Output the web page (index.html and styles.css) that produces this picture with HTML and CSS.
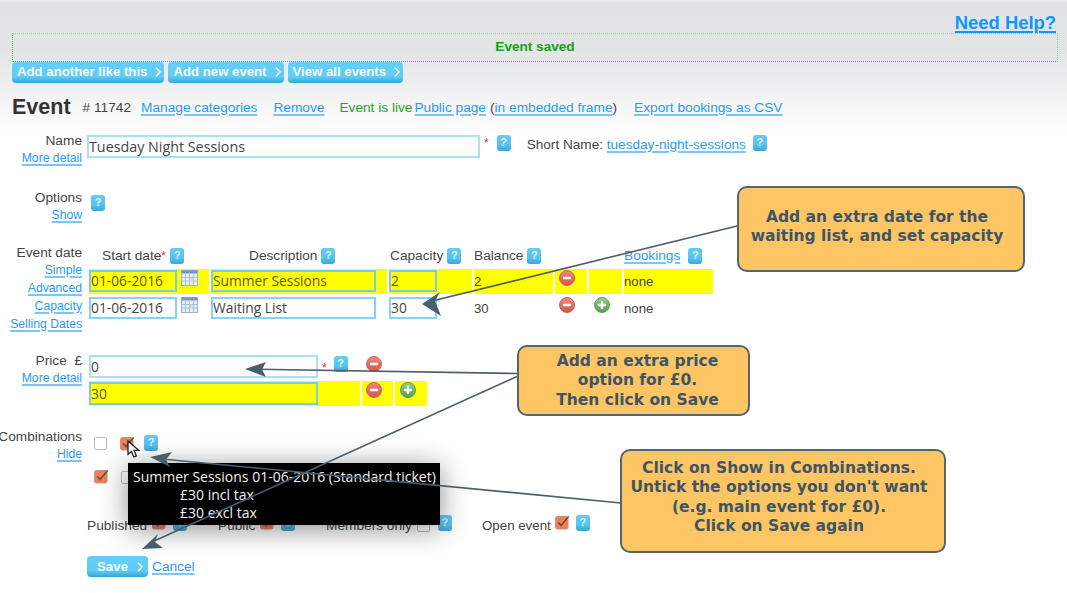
FILE: index.html
```html
<!DOCTYPE html>
<html lang="en">
<head>
<meta charset="utf-8">
<title>Event</title>
<link rel="stylesheet" href="styles.css">
</head>
<body>
<svg class="defs" width="0" height="0" aria-hidden="true">
  <defs>
    <linearGradient id="redg" x1="0" y1="0" x2="0" y2="1"><stop offset="0" stop-color="#f08a80"/><stop offset="1" stop-color="#d9524a"/></linearGradient>
    <linearGradient id="greeng" x1="0" y1="0" x2="0" y2="1"><stop offset="0" stop-color="#9bd08e"/><stop offset="1" stop-color="#4e9f49"/></linearGradient>
    <symbol id="minus" viewBox="0 0 16 16"><circle cx="8" cy="8" r="7.5" fill="url(#redg)" stroke="#c9605a" stroke-width="1"/><rect x="3.8" y="6.8" width="8.4" height="2.4" rx="1" fill="#fff"/></symbol>
    <symbol id="plus" viewBox="0 0 16 16"><circle cx="8" cy="8" r="7.5" fill="url(#greeng)" stroke="#5c9d58" stroke-width="1"/><rect x="3.8" y="6.8" width="8.4" height="2.4" rx="1" fill="#fff"/><rect x="6.8" y="3.8" width="2.4" height="8.4" rx="1" fill="#fff"/></symbol>
    <symbol id="check" viewBox="0 0 15 15"><rect x="0.5" y="1.5" width="12.5" height="12.5" rx="2" fill="#ec8058" stroke="#cf9078"/><path d="M3.2 7.2 L6 10.6 L13.6 1.4" fill="none" stroke="#6b4b3c" stroke-width="1.5"/></symbol>
    <symbol id="cal" viewBox="0 0 17 16"><rect x="0.5" y="0.5" width="16" height="15" fill="#e4eef9" stroke="#9ab4d6"/><rect x="0.5" y="0.5" width="16" height="3" fill="#7b94b8"/><path d="M4.5 4V15M8.5 4V15M12.5 4V15M1 7.5H16M1 11H16" stroke="#a4c2e8" stroke-width="1"/><rect x="9" y="8" width="3" height="3" fill="#f2e27a"/></symbol>
    <symbol id="chev" viewBox="0 0 6 10"><path d="M1 0.8 L5 5 L1 9.2" fill="none" stroke="#fff" stroke-width="1.4"/></symbol>
  </defs>
</svg>

<div class="page">
  <div class="helpbar"><a class="needhelp" href="#">Need Help?</a></div>
  <div class="msg">Event saved</div>
  <div class="actions">
    <a class="btn" href="#">Add another like this<svg class="chev"><use href="#chev"/></svg></a>
    <a class="btn" href="#">Add new event<svg class="chev"><use href="#chev"/></svg></a>
    <a class="btn" href="#">View all events<svg class="chev"><use href="#chev"/></svg></a>
  </div>

  <div class="titlebar">
    <h1>Event</h1>
    <span class="num"># 11742</span>
    <a class="t-manage" href="#">Manage categories</a>
    <a class="t-remove" href="#">Remove</a>
    <span class="live">Event is live</span>
    <a class="t-public" href="#">Public page</a>
    <span class="t-frame">(<a href="#">in embedded frame</a>)</span>
    <a class="t-export" href="#">Export bookings as CSV</a>
  </div>

  <div class="row row-name">
    <div class="label"><span>Name</span><a href="#">More detail</a></div>
    <div class="ctl ctl-name">
      <input class="inp inp-name" type="text" value="Tuesday Night Sessions">
      <span class="star">*</span>
      <span class="q q-name">?</span>
      <span class="short">Short Name: <a href="#">tuesday-night-sessions</a></span>
      <span class="q q-short">?</span>
    </div>
  </div>

  <div class="row row-options">
    <div class="label"><span>Options</span><a href="#">Show</a></div>
    <div class="ctl ctl-options"><span class="q">?</span></div>
  </div>

  <div class="row row-dates">
    <div class="label"><span>Event date</span><a href="#">Simple</a><a href="#">Advanced</a><a href="#">Capacity</a><a href="#">Selling Dates</a></div>
    <table class="dates">
      <colgroup><col class="c1"><col class="c2"><col class="c3"><col class="c4"><col class="c5"><col class="c6"><col class="c7"></colgroup>
      <tr class="head">
        <th><span class="h h-start">Start date<i class="star">*</i><span class="q">?</span></span></th>
        <th><span class="h h-desc">Description<span class="q">?</span></span></th>
        <th><span class="h h-cap">Capacity<span class="q">?</span></span></th>
        <th><span class="h">Balance<span class="q">?</span></span></th>
        <th></th>
        <th></th>
        <th><span class="h"><a href="#">Bookings</a><span class="q q-book">?</span></span></th>
      </tr>
      <tr class="yellow">
        <td><div class="datecell"><input class="inp inp-date" type="text" value="01-06-2016"><svg class="cal"><use href="#cal"/></svg></div></td>
        <td><input class="inp inp-desc" type="text" value="Summer Sessions"></td>
        <td><input class="inp inp-cap" type="text" value="2"></td>
        <td class="val">2</td>
        <td><svg class="ico ico-m"><use href="#minus"/></svg></td>
        <td></td>
        <td class="val">none</td>
      </tr>
      <tr>
        <td><div class="datecell"><input class="inp inp-date" type="text" value="01-06-2016"><svg class="cal"><use href="#cal"/></svg></div></td>
        <td><input class="inp inp-desc" type="text" value="Waiting List"></td>
        <td><input class="inp inp-cap" type="text" value="30"></td>
        <td class="val">30</td>
        <td><svg class="ico ico-m"><use href="#minus"/></svg></td>
        <td><svg class="ico ico-p"><use href="#plus"/></svg></td>
        <td class="val">none</td>
      </tr>
    </table>
  </div>

  <div class="row row-price">
    <div class="label"><span>Price&nbsp; £</span><a href="#">More detail</a></div>
    <table class="prices">
      <colgroup><col class="p1"><col class="p2"><col class="p3"></colgroup>
      <tr>
        <td><div class="pricecell"><input class="inp inp-price" type="text" value="0"><span class="star">*</span><span class="q">?</span></div></td>
        <td><svg class="ico ico-m"><use href="#minus"/></svg></td>
        <td></td>
      </tr>
      <tr class="yellow">
        <td><input class="inp inp-price" type="text" value="30"></td>
        <td><svg class="ico ico-m"><use href="#minus"/></svg></td>
        <td><svg class="ico ico-p"><use href="#plus"/></svg></td>
      </tr>
    </table>
  </div>

  <div class="row row-combo">
    <div class="label"><span>Combinations</span><a href="#">Hide</a></div>
    <div class="combo">
      <div class="combo-line one">
        <input class="box" type="checkbox">
        <svg class="tick"><use href="#check"/></svg>
        <span class="q">?</span>
      </div>
      <div class="combo-line two">
        <svg class="tick"><use href="#check"/></svg>
        <input class="box" type="checkbox">
      </div>
    </div>
  </div>

  <div class="flags">
    <div class="flag"><span class="flag-t">Published</span><svg class="tick"><use href="#check"/></svg><span class="q">?</span></div>
    <div class="flag"><span class="flag-t">Public</span><svg class="tick"><use href="#check"/></svg><span class="q">?</span></div>
    <div class="flag"><span class="flag-t">Members only</span><input class="box" type="checkbox"><span class="q">?</span></div>
    <div class="flag"><span class="flag-t small">Open event</span><svg class="tick"><use href="#check"/></svg><span class="q">?</span></div>
  </div>

  <div class="savebar">
    <a class="btn save" href="#">Save<svg class="chev"><use href="#chev"/></svg></a>
    <a class="cancel" href="#">Cancel</a>
  </div>
</div>

<div class="tooltip">
  <div>Summer Sessions 01-06-2016 (Standard ticket)</div>
  <div class="ind">£30 incl tax</div>
  <div class="ind">£30 excl tax</div>
</div>

<svg class="arrows" viewBox="0 0 1067 593" aria-hidden="true">
  <g stroke="#4a5f6b" stroke-width="1.6" fill="none">
    <path d="M737 226 L432 301"/>
    <path d="M518 373.5 L258 369.3"/>
    <path d="M518 376 L152 542"/>
    <path d="M621 503 L162 459"/>
  </g>
  <g fill="#4a5f6b">
    <path d="M422 304 L440 292 L435 301 L441 316 Z"/>
    <path d="M245 369 L266 362 L262 369.5 L266 377 Z"/>
    <path d="M142 549 L158 534 L155 542 L163 548 Z"/>
    <path d="M150 457 L172 452 L166 459.5 L170 467 Z"/>
  </g>
</svg>

<svg class="cursor" viewBox="0 0 14 19" aria-hidden="true"><path d="M1 1 L1 14.5 L4.4 11.4 L6.8 17 L9.4 15.9 L7 10.4 L11.8 10.4 Z" fill="#f4f4f4" stroke="#111" stroke-width="1.2"/></svg>

<div class="note note1">Add an extra date for the<br>waiting list, and set capacity</div>
<div class="note note2">Add an extra price<br>option for £0.<br>Then click on Save</div>
<div class="note note3">Click on Show in Combinations.<br>Untick the options you don't want<br>(e.g. main event for £0).<br>Click on Save again</div>
</body>
</html>
```
FILE: styles.css
```css
html, body { margin: 0; padding: 0; }
html { height: 100%; }
body {
  position: relative;
  width: 1067px;
  height: 593px;
  overflow: hidden;
  font-family: "Liberation Sans", Arial, sans-serif;
  font-size: 13.7px;
  color: #444;
  background: linear-gradient(#f0f0f1 0, #e1e2e4 3px, #e3e4e6 50px, #fff 135px) no-repeat;
}
.defs { position: absolute; }
a { color: #1f9bfb; text-decoration: underline; text-decoration-color: #7cc4fd; text-decoration-thickness: 1.5px; text-underline-offset: 2px; }

.page { padding: 0 9px 0 12px; }

.helpbar { height: 33px; display: flex; justify-content: flex-end; align-items: flex-start; padding-right: 2px; box-sizing: border-box; }
.needhelp { margin-top: 12px; font-size: 18.4px; font-weight: bold; line-height: 21px; color: #0f96ff; text-decoration-color: #0f96ff; text-decoration-thickness: 2px; }

.msg {
  height: 29px; box-sizing: border-box;
  border: 1px dotted #3fbb3f; border-top-color: #9fcf9f; border-right-color: #9fcf9f; border-left-color: #5fbf5f;
  text-align: center; line-height: 26px;
  font-size: 13.6px; font-weight: bold; color: #12a312;
}

.actions { display: flex; gap: 4px; height: 21px; }
.btn {
  display: inline-flex; align-items: center; height: 21px; box-sizing: border-box;
  padding: 0 3px 0 5px; gap: 8px;
  border-radius: 4px;
  background: linear-gradient(#66cff8 0, #60ccf6 70%, #2ea8d4 100%);
  color: #f3fbff; font-size: 13.2px; font-weight: bold; text-decoration: none;
}
.actions .btn { padding-bottom: 2px; }
.chev { width: 6px; height: 10px; flex: none; }

.titlebar { display: flex; align-items: flex-start; margin-top: 11px; height: 38px; white-space: nowrap; }
.titlebar > * { margin-top: 5px; line-height: 18px; }
.titlebar h1 { margin: 0; font-size: 21.5px; font-weight: bold; color: #333; line-height: 26px; }
.titlebar .num { margin-left: 12px; }
.titlebar .t-manage { margin-left: 10px; }
.titlebar .t-remove { margin-left: 16px; }
.titlebar .live { margin-left: 15px; color: #25a525; }
.titlebar .t-public { margin-left: 2px; }
.titlebar .t-frame { margin-left: 4px; }
.titlebar .t-export { margin-left: 17px; }

.row { display: flex; align-items: flex-start; margin-left: -12px; }
.label {
  width: 82px; flex: none; display: flex; flex-direction: column; align-items: flex-end;
  line-height: 18px; white-space: nowrap;
}
.label span { margin-bottom: -1px; }
.label a { font-size: 12.2px; }

.row-name { height: 36px; }
.ctl { margin-left: 5px; display: flex; align-items: flex-start; white-space: nowrap; }
.ctl-name { padding-top: 3px; }
.row-options { margin-top: 21px; height: 36px; }
.ctl-options { margin-left: 9px; padding-top: 6px; }
.row-dates { margin-top: 19px; height: 90px; }
.row-price { margin-top: 18px; height: 54px; }
.row-combo { margin-top: 22px; height: 58px; }

.inp {
  display: block; box-sizing: border-box; height: 23px; margin: 0; padding: 0 0 1px;
  border: 2px solid #a8e0f6; background: #fff; outline: none;
  font-family: "Open Sans", sans-serif; font-size: 13.8px; color: #444;
}
.inp-name { width: 393px; font-size: 14.3px; }
.star { color: #f22; font-style: normal; margin-left: 4px; font-size: 12px; line-height: 16px; }
.q {
  display: inline-block; width: 14px; height: 16px; flex: none; box-sizing: border-box;
  border-radius: 3px; background: linear-gradient(#66caf4 0, #58c3f0 60%, #35a8da 100%);
  color: #dcf5ff; font-weight: bold; font-size: 11px; line-height: 15px; text-align: center; font-style: normal;
}
.q-name { margin-left: 8px; }
.short { margin-left: 16px; line-height: 18px; padding-top: 1px; font-size: 13.6px; }
.q-short { margin-left: 7px; }

table { border-collapse: separate; border-spacing: 2px; table-layout: fixed; }
td, th { padding: 0; vertical-align: top; }
.dates { margin: 0 0 0 5px; width: 628px; }
.c1 { width: 120px; } .c2 { width: 176px; } .c3 { width: 83px; } .c4 { width: 79px; }
.c5 { width: 32px; } .c6 { width: 33px; } .c7 { width: 89px; }
.head th { height: 21px; font-weight: normal; text-align: left; white-space: nowrap; }
.h { display: flex; align-items: center; gap: 4px; height: 20px; line-height: 20px; }
.h-start { margin-left: 13px; gap: 0; }
.h-start .q { margin-left: 4px; }
.h .star { margin: 0; width: 5px; }
.h-desc { margin-left: 38px; }
.h-cap { margin-left: 1px; }
.q-book { margin-left: 4px; }
.dates tr:not(.head) td { height: 25px; }
.yellow td { background: #ff0; }
.yellow .inp { background: transparent; border-color: #7ccce0; color: #5b5a12; }
.datecell { display: flex; align-items: flex-start; }
.inp-date { width: 88px; height: 22px; margin-top: 1px; border-color: #86d2f7; }
.cal { width: 17px; height: 16px; margin: 1px 0 0 4px; }
.inp-desc { width: 165px; height: 22px; margin-top: 1px; border-color: #86d2f7; }
.inp-cap { width: 48px; height: 22px; margin-top: 1px; border-color: #86d2f7; }
.val { line-height: 25px; font-size: 13.2px; }
.ico { display: block; width: 16px; height: 16px; margin-top: 1px; }
.ico-m { margin-left: 4px; }
.ico-p { margin-left: 5px; }

.prices { margin-left: 5px; width: 342px; }
.p1 { width: 271px; } .p2 { width: 31px; } .p3 { width: 32px; }
.prices td { height: 25px; }
.pricecell { display: flex; align-items: flex-start; }
.pricecell .star { margin-top: 6px; }
.pricecell .q { margin: 2px 0 0 7px; }
.prices .ico-m { margin-top: 2px; }
.prices .yellow .ico-m, .prices .ico-p { margin-top: 1px; }
.inp-price { width: 229px; margin-top: 1px; }

.combo { margin-left: 12px; padding-top: 7px; }
.combo-line { display: flex; align-items: flex-start; }
.combo-line.one { height: 34px; }
.box {
  appearance: none; width: 13px; height: 13px; margin: 2px 0 0; flex: none;
  border: 1px solid #bbb; border-radius: 2px; background: #fff; box-sizing: border-box;
}
.tick { width: 15px; height: 15px; flex: none; }
.one .tick { margin: 1px 0 0 13px; }
.one .q { margin-left: 9px; }
.two .box { margin-left: 12px; }

.flags { display: grid; grid-template-columns: 131px 108px 156px auto; margin: 0 0 0 75px; height: 20px; padding-top: 29px; }
.flag { display: flex; align-items: flex-start; white-space: nowrap; }
.flag-t { line-height: 18px; margin: 2px 5px 0 0; }
.flag-t.small { font-size: 13.3px; margin-right: 4px; }
.flag .q { margin-left: 6px; }
.flag:nth-child(3) .box { margin-top: 4px; }
.flag:nth-child(3) .q { margin-left: 8px; }

.savebar { display: flex; align-items: center; margin: 21px 0 0 75px; gap: 4px; }
.save { width: 61px; justify-content: space-between; padding: 0 5px 0 10px; font-size: 13.3px; }
.cancel { font-size: 13.7px; }

.tooltip {
  position: absolute; left: 128px; top: 463px; width: 311.5px; height: 62px; box-sizing: border-box;
  padding: 5px 0 0 5px;
  background: #000; color: #f2f2f2;
  font-family: "Open Sans", sans-serif; font-size: 14px; line-height: 18px; white-space: nowrap;
  box-shadow: 0 4px 28px rgba(0,0,0,.45);
}
.ind { padding-left: 47px; }

.arrows { position: absolute; left: 0; top: 0; width: 1067px; height: 593px; pointer-events: none; }
.cursor { position: absolute; left: 127px; top: 440px; width: 14px; height: 19px; }

.note {
  position: absolute; box-sizing: border-box;
  background: #fdc564; border: 2px solid #52666f; border-radius: 10px;
  font-family: "DejaVu Sans", sans-serif; font-weight: bold; font-size: 15.5px; line-height: 19.4px;
  color: #3f5563; text-align: center; white-space: nowrap;
}
.note1 { left: 737px; top: 186px; width: 288px; height: 86px; padding: 20px 8px 0 0; }
.note2 { left: 517px; top: 345px; width: 233px; height: 71px; padding: 5px 0 0 8px; }
.note3 { left: 620px; top: 449px; width: 326px; height: 104px; padding: 8px 8px 0 0; }
```
